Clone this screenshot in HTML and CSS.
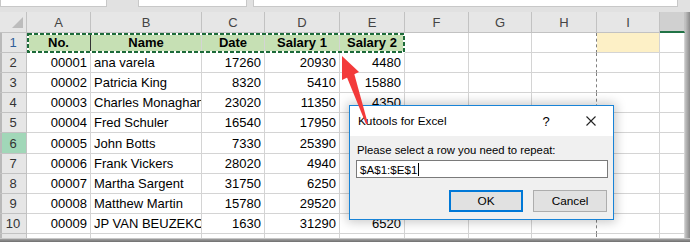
FILE: index.html
```html
<!DOCTYPE html>
<html lang="en">
<head>
<meta charset="UTF-8" />
<title>Repeat row - Kutools for Excel</title>
<link rel="stylesheet" href="styles.css">
</head>
<body>
<div class="screen">
    <!-- formula bar remains -->
    <div class="ribbon">
        <span class="box b1"></span>
        <span class="box b2"></span>
        <span class="box b3"></span>
    </div>

    <div class="middle">
        <div class="sheet">
            <div class="grid">
                <div class="c h corner"><span class="tri"></span></div>
                <div class="c h">A</div><div class="c h">B</div><div class="c h">C</div><div class="c h">D</div><div class="c h">E</div>
                <div class="c h">F</div><div class="c h">G</div><div class="c h">H</div><div class="c h">I</div><div class="c h hx"></div>

                <div class="c h rn first">1</div>
                <div class="c g ga">No.</div><div class="c g">Name</div><div class="c g">Date</div><div class="c g">Salary 1</div><div class="c g">Salary 2</div>
                <div class="c"></div><div class="c"></div><div class="c pb"></div><div class="c y"></div><div class="c"></div>

                <div class="c h rn">2</div>
                <div class="c n">00001</div><div class="c">ana varela</div><div class="c n">17260</div><div class="c n">20930</div><div class="c n">4480</div>
                <div class="c"></div><div class="c"></div><div class="c pb"></div><div class="c"></div><div class="c"></div>

                <div class="c h rn">3</div>
                <div class="c n">00002</div><div class="c">Patricia King</div><div class="c n">8320</div><div class="c n">5410</div><div class="c n">15880</div>
                <div class="c"></div><div class="c"></div><div class="c pb"></div><div class="c"></div><div class="c"></div>

                <div class="c h rn">4</div>
                <div class="c n">00003</div><div class="c">Charles Monaghan</div><div class="c n">23020</div><div class="c n">11350</div><div class="c n">4350</div>
                <div class="c"></div><div class="c"></div><div class="c pb"></div><div class="c"></div><div class="c"></div>

                <!-- column E below row 4 sits under the dialog -->
                <div class="c h rn">5</div>
                <div class="c n">00004</div><div class="c">Fred Schuler</div><div class="c n">16540</div><div class="c n">17950</div><div class="c"></div>
                <div class="c"></div><div class="c"></div><div class="c pb"></div><div class="c"></div><div class="c"></div>

                <div class="c h rn sel">6</div>
                <div class="c n">00005</div><div class="c">John Botts</div><div class="c n">7330</div><div class="c n">25390</div><div class="c"></div>
                <div class="c"></div><div class="c"></div><div class="c pb"></div><div class="c"></div><div class="c"></div>

                <div class="c h rn">7</div>
                <div class="c n">00006</div><div class="c">Frank Vickers</div><div class="c n">28020</div><div class="c n">4940</div><div class="c"></div>
                <div class="c"></div><div class="c"></div><div class="c pb"></div><div class="c"></div><div class="c"></div>

                <div class="c h rn">8</div>
                <div class="c n">00007</div><div class="c">Martha Sargent</div><div class="c n">31750</div><div class="c n">6250</div><div class="c"></div>
                <div class="c"></div><div class="c"></div><div class="c pb"></div><div class="c"></div><div class="c"></div>

                <div class="c h rn">9</div>
                <div class="c n">00008</div><div class="c">Matthew Martin</div><div class="c n">15780</div><div class="c n">29520</div><div class="c"></div>
                <div class="c"></div><div class="c"></div><div class="c pb"></div><div class="c"></div><div class="c"></div>

                <div class="c h rn">10</div>
                <div class="c n">00009</div><div class="c">JP VAN BEUZEKOM</div><div class="c n">1630</div><div class="c n">31290</div><div class="c n">6520</div>
                <div class="c"></div><div class="c"></div><div class="c pb"></div><div class="c"></div><div class="c"></div>

                <div class="c h rn"></div>
                <div class="c"></div><div class="c"></div><div class="c"></div><div class="c"></div><div class="c"></div>
                <div class="c"></div><div class="c"></div><div class="c pb"></div><div class="c"></div><div class="c"></div>
            </div>

            <!-- copy marquee round A1:E1 -->
            <svg class="marquee" width="378" height="20" viewBox="0 0 378 20">
                <rect x="1" y="1" width="376" height="18" fill="none" stroke="#fff" stroke-width="2"/>
                <rect x="1" y="1" width="376" height="18" fill="none" stroke="#1d6b3a" stroke-width="2" stroke-dasharray="4 2"/>
            </svg>
        </div>
        <div class="edge-r"></div>
    </div>
    <div class="edge-b"></div>

    <div class="dialog">
        <div class="dlg-title">
            <span class="dlg-name">Kutools for Excel</span>
            <span class="dlg-help">?</span>
            <span class="dlg-close">
                <svg width="10" height="10" viewBox="0 0 10 10">
                    <path d="M0.5 0.5 L9.5 9.5 M9.5 0.5 L0.5 9.5" stroke="#222" stroke-width="1.1" fill="none"/>
                </svg>
            </span>
        </div>
        <div class="dlg-body">
            <div class="dlg-label">Please select a row you need to repeat:</div>
            <div class="dlg-input">$A$1:$E$1<span class="caret"></span></div>
            <div class="dlg-btns">
                <button class="btn ok">OK</button>
                <button class="btn">Cancel</button>
            </div>
        </div>
    </div>

    <svg class="arrow" width="690" height="242" viewBox="0 0 690 242">
        <polygon points="342,56 359,72 342,80" fill="#f33a3a"/>
        <polygon points="346,75 354,73 368,124 366,124" fill="#f33a3a"/>
    </svg>
</div>
</body>
</html>
```

FILE: styles.css
```css
* {
    box-sizing: border-box;
    margin: 0;
    padding: 0;
}
body {
    background: #fff;
    font-family: "Liberation Sans", Arial, sans-serif;
    overflow: hidden;
}
.screen {
    position: relative;
    width: 690px;
    height: 242px;
    display: flex;
    flex-direction: column;
    background: #e4e4e4;
    overflow: hidden;
}
/* top strip */
.ribbon {
    height: 12px;
    display: flex;
    align-items: flex-start;
    background: #e1e1e1;
}
.box {
    height: 7px;
    background: #fff;
    border: 1px solid #c8c8c8;
    border-top: none;
}
.b1 { width: 107px; }
.b2 { width: 109px; margin-left: 31px; }
.b3 { width: 425px; margin-left: 6px; }

.middle {
    flex: 1;
    display: flex;
    min-height: 0;
}
.sheet {
    position: relative;
    width: 685px;
    overflow: hidden;
    background: #fff;
}
.grid {
    display: grid;
    grid-template-columns: 27px 64px 111px 63px 75px 65px 64px 63px 65px 63px 25px;
    grid-template-rows: 21px repeat(5, 20px) 21px repeat(4, 20px) 20px;
    font-size: 13px;
    color: #000;
}
.c {
    display: flex;
    align-items: center;
    padding: 0 3px;
    white-space: nowrap;
    overflow: hidden;
    border-right: 1px solid #d4d4d4;
    border-bottom: 1px solid #d4d4d4;
}
.c.n {
    justify-content: flex-end;
}
.c.h {
    justify-content: center;
    background: #e6e6e6;
    border-color: #c2c2c2;
    color: #444;
    padding: 0;
}
.c.rn {
    box-shadow: inset 2px 0 0 #b9b9b9;
    color: #333;
}
.c.rn.first {
    color: #2f5f9a;
}
.c.rn.sel {
    background: #a1d7b8;
}
.corner {
    align-items: flex-end !important;
    justify-content: flex-end !important;
    padding: 0 3px 4px 0 !important;
}
.tri {
    width: 11px;
    height: 11px;
    background: #bcbcbc;
    clip-path: polygon(100% 0, 100% 100%, 0 100%);
}
.c.hx {
    background: #d0d0d0;
    border-bottom: 2px solid #217346;
}
.c.g {
    justify-content: center;
    background: #c6e0b4;
    font-weight: 700;
    padding: 0;
}
.c.ga {
    border-right-color: #333;
}
.c.y {
    background: #fdf0c6;
}
.c.pb {
    border-right: 1px dashed #808080;
}
.marquee {
    position: absolute;
    left: 27px;
    top: 21px;
}
.edge-r {
    width: 5px;
    background: linear-gradient(to right, #c4c4c4, #8a8a8a);
}
.edge-b {
    height: 4px;
    background: linear-gradient(#a0a0a0, #6e6e6e);
    border-top: 1px solid #c8c8c8;
}

/* dialog */
.dialog {
    position: absolute;
    left: 349px;
    top: 105px;
    width: 265px;
    height: 115px;
    border: 1px solid #1883d7;
    background: #f0f0f0;
    box-shadow: 0 0 10px 2px rgba(0, 0, 0, 0.22);
    font-size: 11.3px;
    color: #000;
    display: flex;
    flex-direction: column;
}
.dlg-title {
    height: 30px;
    background: #fff;
    display: flex;
    align-items: center;
    font-size: 11.8px;
}
.dlg-name {
    flex: 1;
    padding-left: 8px;
}
.dlg-help {
    width: 46px;
    text-align: center;
    font-size: 13px;
}
.dlg-close {
    width: 44px;
    display: flex;
    justify-content: center;
}
.dlg-body {
    flex: 1;
    padding: 7px 5px 0 6px;
}
.dlg-label {
    height: 14px;
    line-height: 14px;
    padding-left: 1px;
}
.dlg-input {
    margin-top: 3px;
    height: 18px;
    background: #fff;
    border: 1px solid #7a7a7a;
    display: flex;
    align-items: center;
    padding-left: 3px;
    font-size: 11.6px;
}
.caret {
    width: 1px;
    height: 13px;
    margin-left: 1px;
    background: #000;
}
.dlg-btns {
    margin-top: 12px;
    display: flex;
    justify-content: flex-end;
    gap: 10px;
    padding-right: 1px;
}
.btn {
    width: 74px;
    height: 22px;
    background: #e1e1e1;
    border: 1px solid #adadad;
    font-family: inherit;
    font-size: 11.8px;
    color: #000;
}
.btn.ok {
    border: 2px solid #0078d7;
}
.arrow {
    position: absolute;
    left: 0;
    top: 0;
    pointer-events: none;
}
```
